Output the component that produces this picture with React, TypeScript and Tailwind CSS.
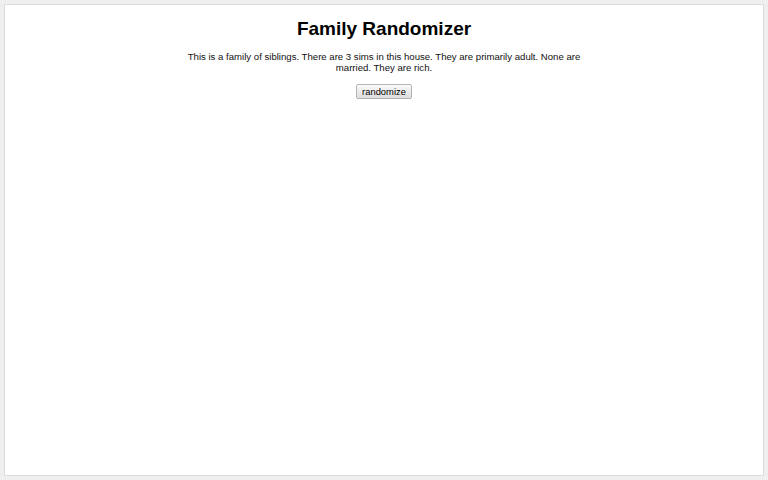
export default function App() {
  return (
    <div className="min-h-screen bg-[#efefef] p-[4px] font-['Liberation_Sans',Arial,sans-serif]">
      <main className="h-[472px] bg-white border border-[#dcdcdc] flex flex-col items-center pt-[11px]">
        <h1 className="text-[19px] font-bold text-black leading-[26px]">Family Randomizer</h1>
        <p className="mt-[9px] max-w-[410px] text-center text-[9.6px] leading-[11px] text-[#111]">
          This is a family of siblings. There are 3 sims in this house. They are primarily adult. None are married. They are rich.
        </p>
        <button className="mt-[11px] h-[15px] px-[5px] text-[9.4px] leading-none text-black border border-[#b5b5b5] rounded-[2px] bg-gradient-to-b from-[#fafafa] to-[#dedede]">
          randomize
        </button>
      </main>
    </div>
  );
}
